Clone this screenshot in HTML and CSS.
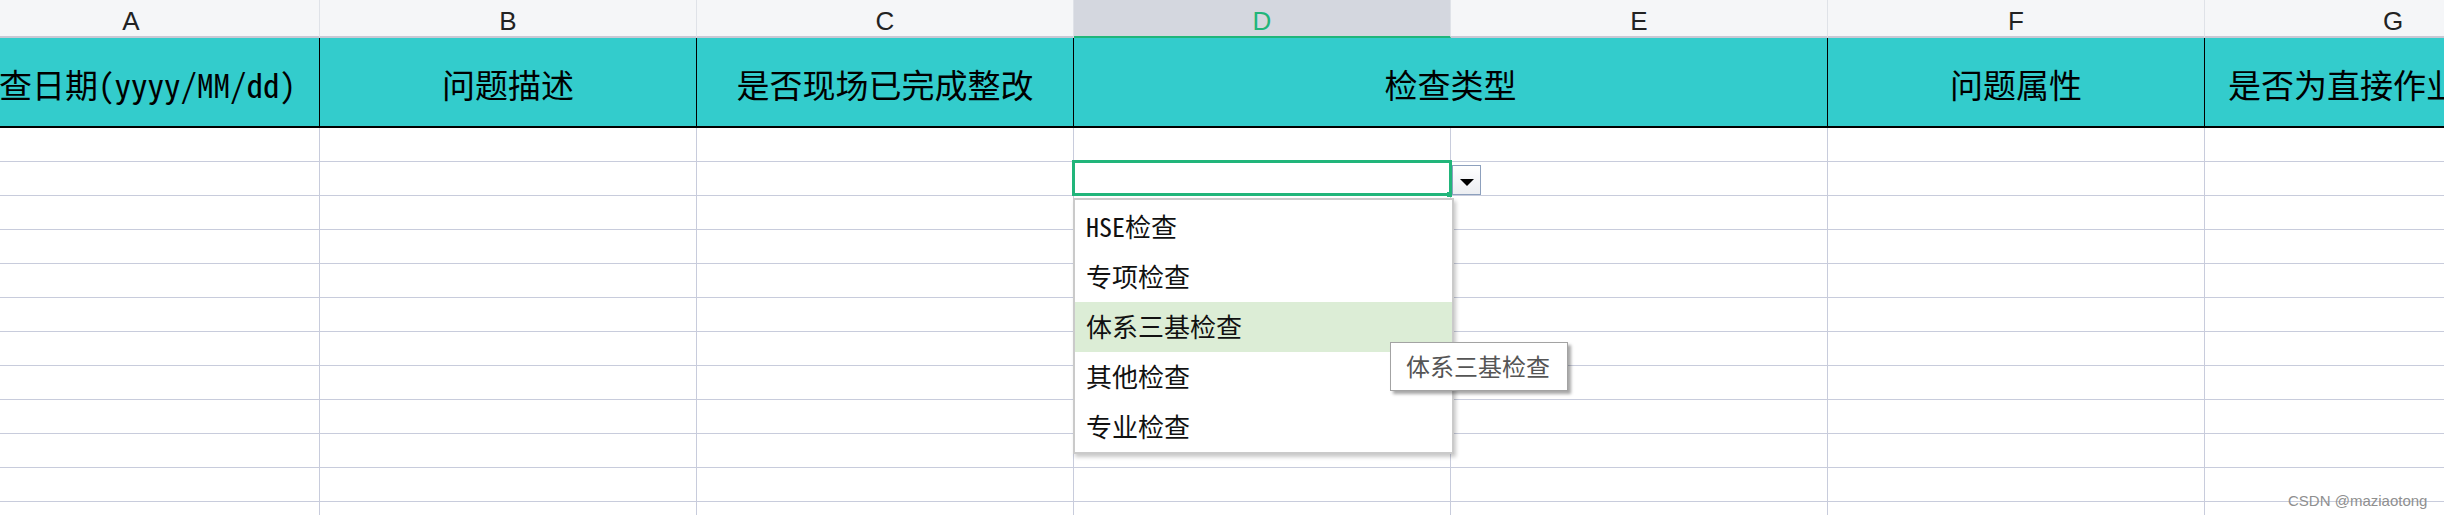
FILE: index.html
```html
<!DOCTYPE html>
<html lang="zh-CN">
<head>
<meta charset="utf-8">
<title>检查类型</title>
<link rel="stylesheet" href="styles.css">
</head>
<body>
<div class="sheet">
  <div class="ch">A</div>
  <div class="ch">B</div>
  <div class="ch">C</div>
  <div class="ch active">D</div>
  <div class="ch">E</div>
  <div class="ch">F</div>
  <div class="ch">G</div>

  <div class="th">检查日期(yyyy/MM/dd)</div>
  <div class="th">问题描述</div>
  <div class="th">是否现场已完成整改</div>
  <div class="th span2">检查类型</div>
  <div class="th">问题属性</div>
  <div class="th">是否为直接作业的问题</div>

  <div class="td"></div><div class="td"></div><div class="td"></div><div class="td"></div><div class="td"></div><div class="td"></div><div class="td"></div>
  <div class="td"></div><div class="td"></div><div class="td"></div><div class="td"></div><div class="td"></div><div class="td"></div><div class="td"></div>
  <div class="td"></div><div class="td"></div><div class="td"></div><div class="td"></div><div class="td"></div><div class="td"></div><div class="td"></div>
  <div class="td"></div><div class="td"></div><div class="td"></div><div class="td"></div><div class="td"></div><div class="td"></div><div class="td"></div>
  <div class="td"></div><div class="td"></div><div class="td"></div><div class="td"></div><div class="td"></div><div class="td"></div><div class="td"></div>
  <div class="td"></div><div class="td"></div><div class="td"></div><div class="td"></div><div class="td"></div><div class="td"></div><div class="td"></div>
  <div class="td"></div><div class="td"></div><div class="td"></div><div class="td"></div><div class="td"></div><div class="td"></div><div class="td"></div>
  <div class="td"></div><div class="td"></div><div class="td"></div><div class="td"></div><div class="td"></div><div class="td"></div><div class="td"></div>
  <div class="td"></div><div class="td"></div><div class="td"></div><div class="td"></div><div class="td"></div><div class="td"></div><div class="td"></div>
  <div class="td"></div><div class="td"></div><div class="td"></div><div class="td"></div><div class="td"></div><div class="td"></div><div class="td"></div>
  <div class="td"></div><div class="td"></div><div class="td"></div><div class="td"></div><div class="td"></div><div class="td"></div><div class="td"></div>
  <div class="td"></div><div class="td"></div><div class="td"></div><div class="td"></div><div class="td"></div><div class="td"></div><div class="td"></div>
</div>

<div class="sel"></div>
<div class="ddbtn"><span class="tri"></span></div>

<div class="ddlist">
  <div class="item">HSE检查</div>
  <div class="item">专项检查</div>
  <div class="item hl">体系三基检查</div>
  <div class="item">其他检查</div>
  <div class="item">专业检查</div>
</div>

<div class="tip">体系三基检查</div>

<div class="wm">CSDN @maziaotong</div>
</body>
</html>
```

FILE: styles.css
```css
* { box-sizing: border-box; }

html, body {
  margin: 0;
  padding: 0;
}

body {
  width: 2444px;
  height: 515px;
  overflow: hidden;
  position: relative;
  background: #ffffff;
  font-family: "Noto Sans CJK SC", sans-serif;
}

.sheet {
  margin-left: -57px;
  display: grid;
  grid-template-columns: repeat(7, 377px);
}

.ch {
  height: 38px;
  background: #f5f6f8;
  border-right: 1px solid #dfe2e8;
  border-bottom: 2px solid #c9c8d4;
  font-family: "Liberation Sans", Arial, sans-serif;
  font-size: 26px;
  color: #222222;
  text-align: center;
  line-height: 29px;
  padding-top: 7px;
}

.ch.active {
  background: #d4d7df;
  color: #21b57a;
  border-bottom-color: #21b57a;
}

.th {
  height: 90px;
  background: #33cccc;
  border-right: 1px solid #000000;
  border-bottom: 2px solid #000000;
  display: flex;
  align-items: center;
  justify-content: center;
  padding-top: 3px;
  font-size: 33px;
  color: #000000;
  white-space: nowrap;
  font-feature-settings: "hwid";
}

.th.span2 { grid-column: span 2; }

.td {
  height: 34px;
  border-right: 1px solid #c8ccdc;
  border-bottom: 1px solid #c8ccdc;
}

.sel {
  position: absolute;
  left: 1072px;
  top: 160px;
  width: 380px;
  height: 36px;
  border: 3px solid #21b57a;
}

.sel::after {
  content: "";
  position: absolute;
  right: -3px;
  bottom: -4px;
  width: 5px;
  height: 5px;
  background: #21b57a;
}

.ddbtn {
  position: absolute;
  left: 1452px;
  top: 165px;
  width: 29px;
  height: 30px;
  border: 1px solid #8da0bd;
  background: linear-gradient(#ffffff, #eceef2);
  display: flex;
  justify-content: center;
  padding-top: 13px;
}

.tri {
  width: 0;
  height: 0;
  border-left: 7px solid transparent;
  border-right: 7px solid transparent;
  border-top: 7px solid #000000;
}

.ddlist {
  position: absolute;
  left: 1073px;
  top: 198px;
  width: 381px;
  height: 256px;
  background: #ffffff;
  border: 2px solid #cacaca;
  box-shadow: 2px 3px 4px rgba(0, 0, 0, 0.22);
  padding-top: 2px;
  font-feature-settings: "hwid";
}

.item {
  height: 50px;
  line-height: 47px;
  padding-left: 11px;
  font-size: 26px;
  color: #111111;
  white-space: nowrap;
}

.item.hl { background: #dcedd6; }

.tip {
  position: absolute;
  left: 1390px;
  top: 342px;
  width: 178px;
  height: 49px;
  border: 1px solid #a3a3a3;
  background: #ffffff;
  box-shadow: 3px 3px 3px rgba(0, 0, 0, 0.35);
  font-size: 24px;
  color: #555555;
  padding-left: 15px;
  line-height: 46px;
  white-space: nowrap;
}

.wm {
  position: absolute;
  left: 2288px;
  top: 492px;
  font-family: "Liberation Sans", Arial, sans-serif;
  font-size: 15px;
  color: #8f8f8f;
  white-space: nowrap;
}
```
